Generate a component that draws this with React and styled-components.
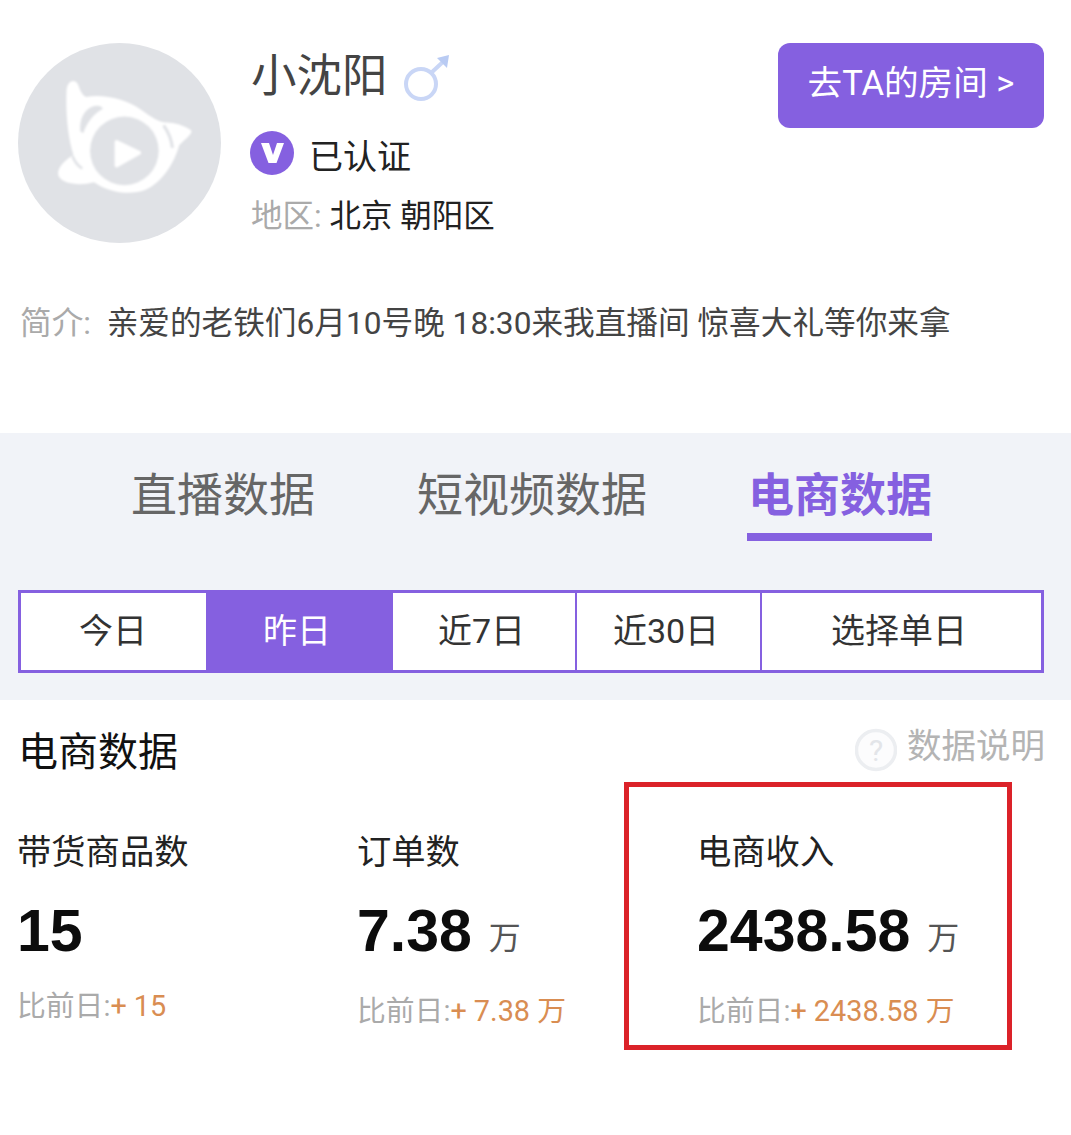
import React from 'react';
import styled, { createGlobalStyle } from 'styled-components';

const purple = '#8560e0';

const GlobalStyle = createGlobalStyle`
  * { box-sizing: border-box; }
  html, body { margin: 0; padding: 0; background: #fff; }
  body { font-family: Roboto, "Noto Sans CJK SC", sans-serif; }
`;

const Page = styled.div`
  position: relative;
  width: 1071px;
  height: 1135px;
  background: #fff;
  overflow: hidden;
`;

const Header = styled.header`
  display: flex;
  height: 244px;
  padding: 43px 27px 0 18px;
`;

const Avatar = styled.div`
  flex: none;
  width: 203px;
  height: 200px;
  border-radius: 50%;
  background: #e0e2e6;
  svg { display: block; filter: blur(0.8px); }
`;

const Info = styled.div`
  flex: 1;
  margin-left: 29px;
`;

const NameRow = styled.div`
  display: flex;
  align-items: center;
  gap: 14px;
  height: 64px;
  margin-left: 1px;
`;

const Name = styled.h1`
  margin: 0;
  padding-top: 4px;
  font-size: 45.5px;
  font-weight: 400;
  line-height: 60px;
  color: #444;
`;

const VerifiedRow = styled.div`
  display: flex;
  align-items: center;
  gap: 15px;
  height: 44px;
  margin-top: 24px;
  font-size: 34px;
  color: #222;
`;

const VerifiedText = styled.span`
  padding-top: 2px;
`;

const Region = styled.div`
  margin-top: 20px;
  margin-left: 1px;
  font-size: 31.5px;
  line-height: 44px;
  color: #222;
  white-space: pre;
`;

const Muted = styled.span`
  color: #aaa;
`;

const RoomButton = styled.button`
  flex: none;
  width: 266px;
  height: 85px;
  padding: 0 0 12px;
  border: 0;
  border-radius: 12px;
  background: ${purple};
  color: #fff;
  font: inherit;
  font-size: 34.6px;
`;

const Intro = styled.p`
  margin: 58px 0 0 20px;
  height: 131px;
  font-size: 31.65px;
  line-height: 44px;
  color: #444;
  white-space: pre;
`;

const DataPanel = styled.section`
  height: 267px;
  padding-top: 32px;
  background: #f1f3f8;
`;

const Tabs = styled.nav`
  display: flex;
  height: 76px;
  padding-left: 131px;
`;

const Tab = styled.div`
  position: relative;
  margin-right: ${(p) => p.$gap}px;
  font-size: 46px;
  line-height: 60px;
  font-weight: ${(p) => (p.$active ? 700 : 400)};
  color: ${(p) => (p.$active ? purple : '#666')};

  ${(p) => p.$active && `
    &::after {
      content: '';
      position: absolute;
      left: -1px;
      right: 0;
      top: 68px;
      height: 8px;
      background: ${purple};
    }
  `}
`;

const Range = styled.div`
  display: grid;
  grid-template-columns: 185px 185px 184px 185px 1fr;
  width: 1026px;
  height: 83px;
  margin: 49px 0 0 18px;
  border: 3px solid ${purple};
  background: #fff;
`;

const RangeCell = styled.div`
  display: flex;
  align-items: center;
  justify-content: center;
  padding: 0 ${(p) => (p.$first ? 1 : 5)}px 6px 0;
  font-size: 34px;
  color: ${(p) => (p.$active ? '#fff' : '#333')};
  background: ${(p) => (p.$active ? purple : 'transparent')};
  border-left: ${(p) => (p.$first ? 0 : `2px solid ${purple}`)};
`;

const SectionHead = styled.div`
  display: flex;
  justify-content: space-between;
  align-items: flex-start;
  height: 128px;
  padding: 23px 26px 0 18px;
`;

const SectionTitle = styled.h2`
  margin: 0;
  padding-top: 1px;
  font-size: 40px;
  font-weight: 400;
  line-height: 58px;
  color: #111;
`;

const Help = styled.div`
  display: flex;
  gap: 10px;
  font-size: 34.5px;
  line-height: 46px;
  color: #b4b4b4;
  svg { margin-top: 5px; }
`;

const Metrics = styled.div`
  display: grid;
  grid-template-columns: repeat(3, 340px);
  padding-left: 17px;
`;

const Metric = styled.div`
  min-width: 0;
`;

const MetricLabel = styled.div`
  padding-top: 1px;
  font-size: 34.3px;
  line-height: 47px;
  color: #222;
`;

const MetricValue = styled.div`
  display: flex;
  align-items: baseline;
  height: 70px;
  margin-top: 20px;
  font-family: "Liberation Sans", sans-serif;
  font-size: 59px;
  line-height: 70px;
  font-weight: 700;
  color: #0c0c0c;
`;

const Unit = styled.span`
  align-self: flex-start;
  margin: 17px 0 0 17px;
  font-family: "Noto Sans CJK SC", sans-serif;
  font-size: 32px;
  line-height: 44px;
  font-weight: 400;
  color: #555;
`;

const Compare = styled.div`
  margin-top: ${(p) => p.$top}px;
  font-size: 28.8px;
  line-height: 44px;
  color: #aaa;
  white-space: pre;
`;

const Delta = styled.span`
  color: #d98d52;
`;

const Highlight = styled.div`
  position: absolute;
  left: 624px;
  top: 782px;
  width: 388px;
  height: 268px;
  border: 5px solid #db2229;
  pointer-events: none;
`;

// the platform logo, greyed out as the empty avatar
const BrandMark = () => (
  <svg width="203" height="200" viewBox="0 0 204 204" aria-hidden="true">
    <path
      fill="#fff"
      d="M48 48C49 38 57 36 60 43C62 49 64 53 68 55C86 52 108 57 124 68C134 75 142 81 150 81C158 81 168 84 175 89C177 92 170 97 163 104C158 122 146 142 128 150C112 156 90 152 76 142C62 146 44 144 40 136C37 128 46 120 55 114C49 96 47 70 48 48Z"
    />
    <path fill="#e0e2e6" d="M62 90C61 78 66 68 74 65C79 63 84 64 85 67C76 72 69 80 65 92Z" />
    <path fill="none" stroke="#e0e2e6" strokeWidth="3" d="M147 84C152 91 155 98 156 107" />
    <path fill="none" stroke="#e0e2e6" strokeWidth="2.5" d="M54 115C56 121 59 125 64 128" />
    <circle cx="107" cy="110" r="35" fill="#e0e2e6" />
    <path fill="#fff" stroke="#fff" strokeWidth="4" strokeLinejoin="round" d="M99 101L122 112L99 125Z" />
  </svg>
);

const MaleIcon = () => (
  <svg width="50" height="54" viewBox="0 0 50 54" aria-hidden="true">
    <circle cx="19" cy="36" r="15" fill="none" stroke="#c9d6f6" strokeWidth="4" />
    <path d="M29 25 43 12" fill="none" stroke="#c9d6f6" strokeWidth="4" />
    <path d="M35 10 47 7 45 20Z" fill="#b9cbf3" />
  </svg>
);

const VerifiedIcon = () => (
  <svg width="44" height="44" viewBox="0 0 44 44" aria-hidden="true">
    <circle cx="22" cy="22" r="22" fill={purple} />
    <path d="M11 12h8l4 12 4-12h7l-7.5 20h-8z" fill="#fff" />
  </svg>
);

const HelpIcon = () => (
  <svg width="42" height="44" viewBox="0 0 42 44" aria-hidden="true">
    <circle cx="21" cy="22" r="19.5" fill="#fcfcfd" stroke="#eceef1" strokeWidth="3.5" />
    <text x="21" y="33" fontSize="30" textAnchor="middle" fill="#e3e5e9" fontFamily="Roboto, sans-serif">?</text>
  </svg>
);

const ranges = ['今日', '昨日', '近7日', '近30日', '选择单日'];

const metrics = [
  { label: '带货商品数', value: '15', delta: '+ 15', top: 18 },
  { label: '订单数', value: '7.38', unit: '万', delta: '+ 7.38 万', top: 23 },
  { label: '电商收入', value: '2438.58', unit: '万', delta: '+ 2438.58 万', top: 23 },
];

export default function App() {
  return (
    <Page>
      <GlobalStyle />
      <Header>
        <Avatar>
          <BrandMark />
        </Avatar>
        <Info>
          <NameRow>
            <Name>小沈阳</Name>
            <MaleIcon />
          </NameRow>
          <VerifiedRow>
            <VerifiedIcon />
            <VerifiedText>已认证</VerifiedText>
          </VerifiedRow>
          <Region>
            <Muted>地区: </Muted>北京 朝阳区
          </Region>
        </Info>
        <RoomButton>去TA的房间 &gt;</RoomButton>
      </Header>
      <Intro>
        <Muted>简介:  </Muted>亲爱的老铁们6月10号晚 18:30来我直播间 惊喜大礼等你来拿
      </Intro>
      <DataPanel>
        <Tabs>
          <Tab $gap={102}>直播数据</Tab>
          <Tab $gap={101}>短视频数据</Tab>
          <Tab $active>电商数据</Tab>
        </Tabs>
        <Range>
          {ranges.map((r, i) => (
            <RangeCell key={r} $active={i === 1} $first={i === 0}>{r}</RangeCell>
          ))}
        </Range>
      </DataPanel>
      <SectionHead>
        <SectionTitle>电商数据</SectionTitle>
        <Help>
          <HelpIcon />
          数据说明
        </Help>
      </SectionHead>
      <Metrics>
        {metrics.map((m) => (
          <Metric key={m.label}>
            <MetricLabel>{m.label}</MetricLabel>
            <MetricValue>
              {m.value}
              {m.unit && <Unit>{m.unit}</Unit>}
            </MetricValue>
            <Compare $top={m.top}>
              比前日:<Delta>{m.delta}</Delta>
            </Compare>
          </Metric>
        ))}
      </Metrics>
      <Highlight />
    </Page>
  );
}
